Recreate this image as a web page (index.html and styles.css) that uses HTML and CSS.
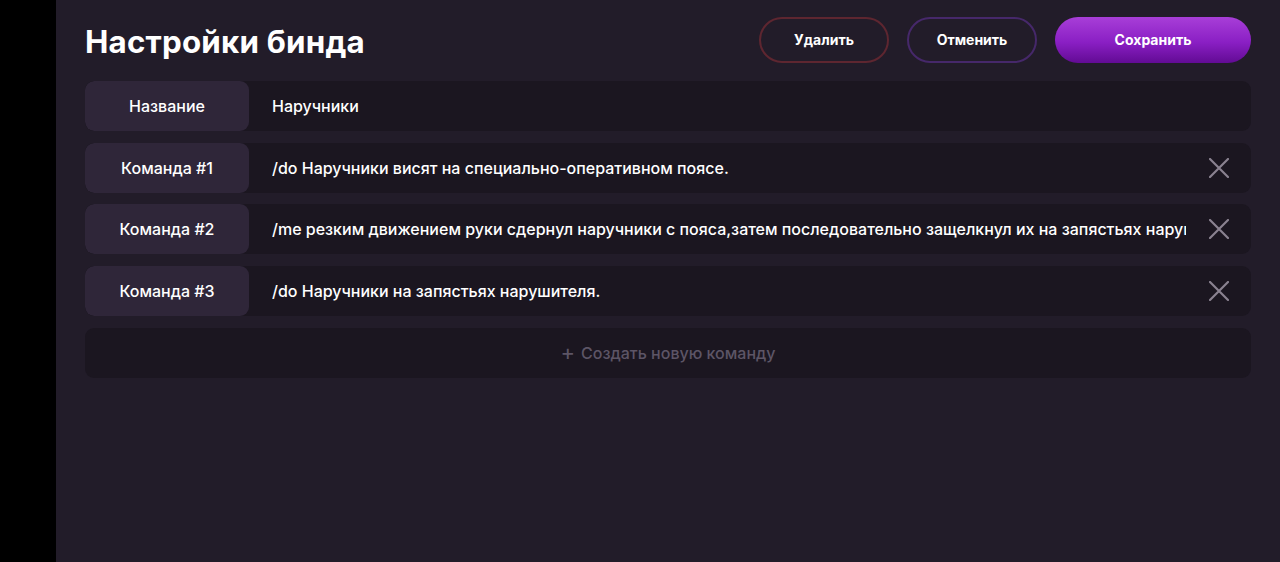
FILE: index.html
```html
<!DOCTYPE html>
<html lang="ru">
<head>
<meta charset="utf-8">
<title>Настройки бинда</title>
<link rel="stylesheet" href="styles.css">
</head>
<body>
<div class="app">
  <aside class="strip"></aside>
  <main class="panel">
    <header class="head">
      <h1 class="title">Настройки бинда</h1>
      <div class="actions">
        <button class="btn btn-delete">Удалить</button>
        <button class="btn btn-cancel">Отменить</button>
        <button class="btn btn-save">Сохранить</button>
      </div>
    </header>
    <div class="rows">
      <div class="row">
        <div class="label">Название</div>
        <div class="value">Наручники</div>
      </div>
      <div class="row">
        <div class="label">Команда #1</div>
        <div class="value">/do Наручники висят на специально-оперативном поясе.</div>
        <span class="close"><svg viewBox="0 0 20 20" width="20" height="20"><path d="M1 1L19 19M19 1L1 19" stroke="#8a8290" stroke-width="2.2" stroke-linecap="round"/></svg></span>
      </div>
      <div class="row">
        <div class="label">Команда #2</div>
        <div class="value">/me резким движением руки сдернул наручники с пояса,затем последовательно защелкнул их на запястьях нарушителя и проверил надёжность фиксации.</div>
        <span class="close"><svg viewBox="0 0 20 20" width="20" height="20"><path d="M1 1L19 19M19 1L1 19" stroke="#8a8290" stroke-width="2.2" stroke-linecap="round"/></svg></span>
      </div>
      <div class="row">
        <div class="label">Команда #3</div>
        <div class="value">/do Наручники на запястьях нарушителя.</div>
        <span class="close"><svg viewBox="0 0 20 20" width="20" height="20"><path d="M1 1L19 19M19 1L1 19" stroke="#8a8290" stroke-width="2.2" stroke-linecap="round"/></svg></span>
      </div>
      <div class="row add">
        <span class="plus">+</span> Создать новую команду
      </div>
    </div>
  </main>
</div>
</body>
</html>
```
FILE: styles.css
```css
* { box-sizing: border-box; }
html, body { margin: 0; padding: 0; height: 100%; }
body {
  background: #000;
  font-family: "Inter", "Noto Sans", sans-serif;
  color: #fff;
}
.app { display: flex; height: 562px; overflow: hidden; }
.strip { width: 56px; background: #000; flex: none; }
.panel {
  flex: 1;
  min-width: 0;
  background: #221c29;
  padding: 17px 29px 0 29px;
}
.head {
  display: flex;
  align-items: center;
  justify-content: space-between;
  height: 46px;
  margin-bottom: 18px;
}
.title {
  margin: 3px 0 0 0;
  font-size: 31.3px;
  font-weight: 700;
  letter-spacing: 0.2px;
  color: #fff;
}
.actions { display: flex; gap: 18px; }
.btn {
  height: 46px;
  border-radius: 23px;
  font-family: inherit;
  font-size: 14px;
  font-weight: 700;
  color: #fff;
  background: transparent;
  border: 2px solid;
  width: 130px;
  padding: 0 0 2px 0;
}
.btn-delete { border-color: #5e2630; }
.btn-cancel { border-color: #46286a; }
.btn-save {
  width: 196px;
  border: none;
  background: linear-gradient(180deg, #a83ed8 0%, #8a1fc4 55%, #620b94 100%);
}
.rows { display: flex; flex-direction: column; gap: 11.7px; }
.row {
  display: flex;
  align-items: center;
  height: 50px;
  flex: none;
  background: #1b1620;
  border-radius: 9px;
  padding-right: 22px;
  overflow: hidden;
}
.label {
  flex: none;
  width: 164px;
  height: 100%;
  display: flex;
  align-items: center;
  justify-content: center;
  background: #2f2639;
  border-radius: 9px;
  font-size: 16px;
  font-weight: 500;
}
.value {
  flex: 1;
  min-width: 0;
  margin-left: 23px;
  margin-right: 23px;
  font-size: 16px;
  font-weight: 500;
  white-space: nowrap;
  overflow: hidden;
}
.close { flex: none; width: 20px; height: 20px; display: flex; }
.add {
  justify-content: center;
  padding-right: 0;
  color: #5d5566;
  font-size: 16px;
  font-weight: 500;
  gap: 6px;
}
.plus { font-size: 22px; font-weight: 400; line-height: 1; margin-top: -2px; }
```
